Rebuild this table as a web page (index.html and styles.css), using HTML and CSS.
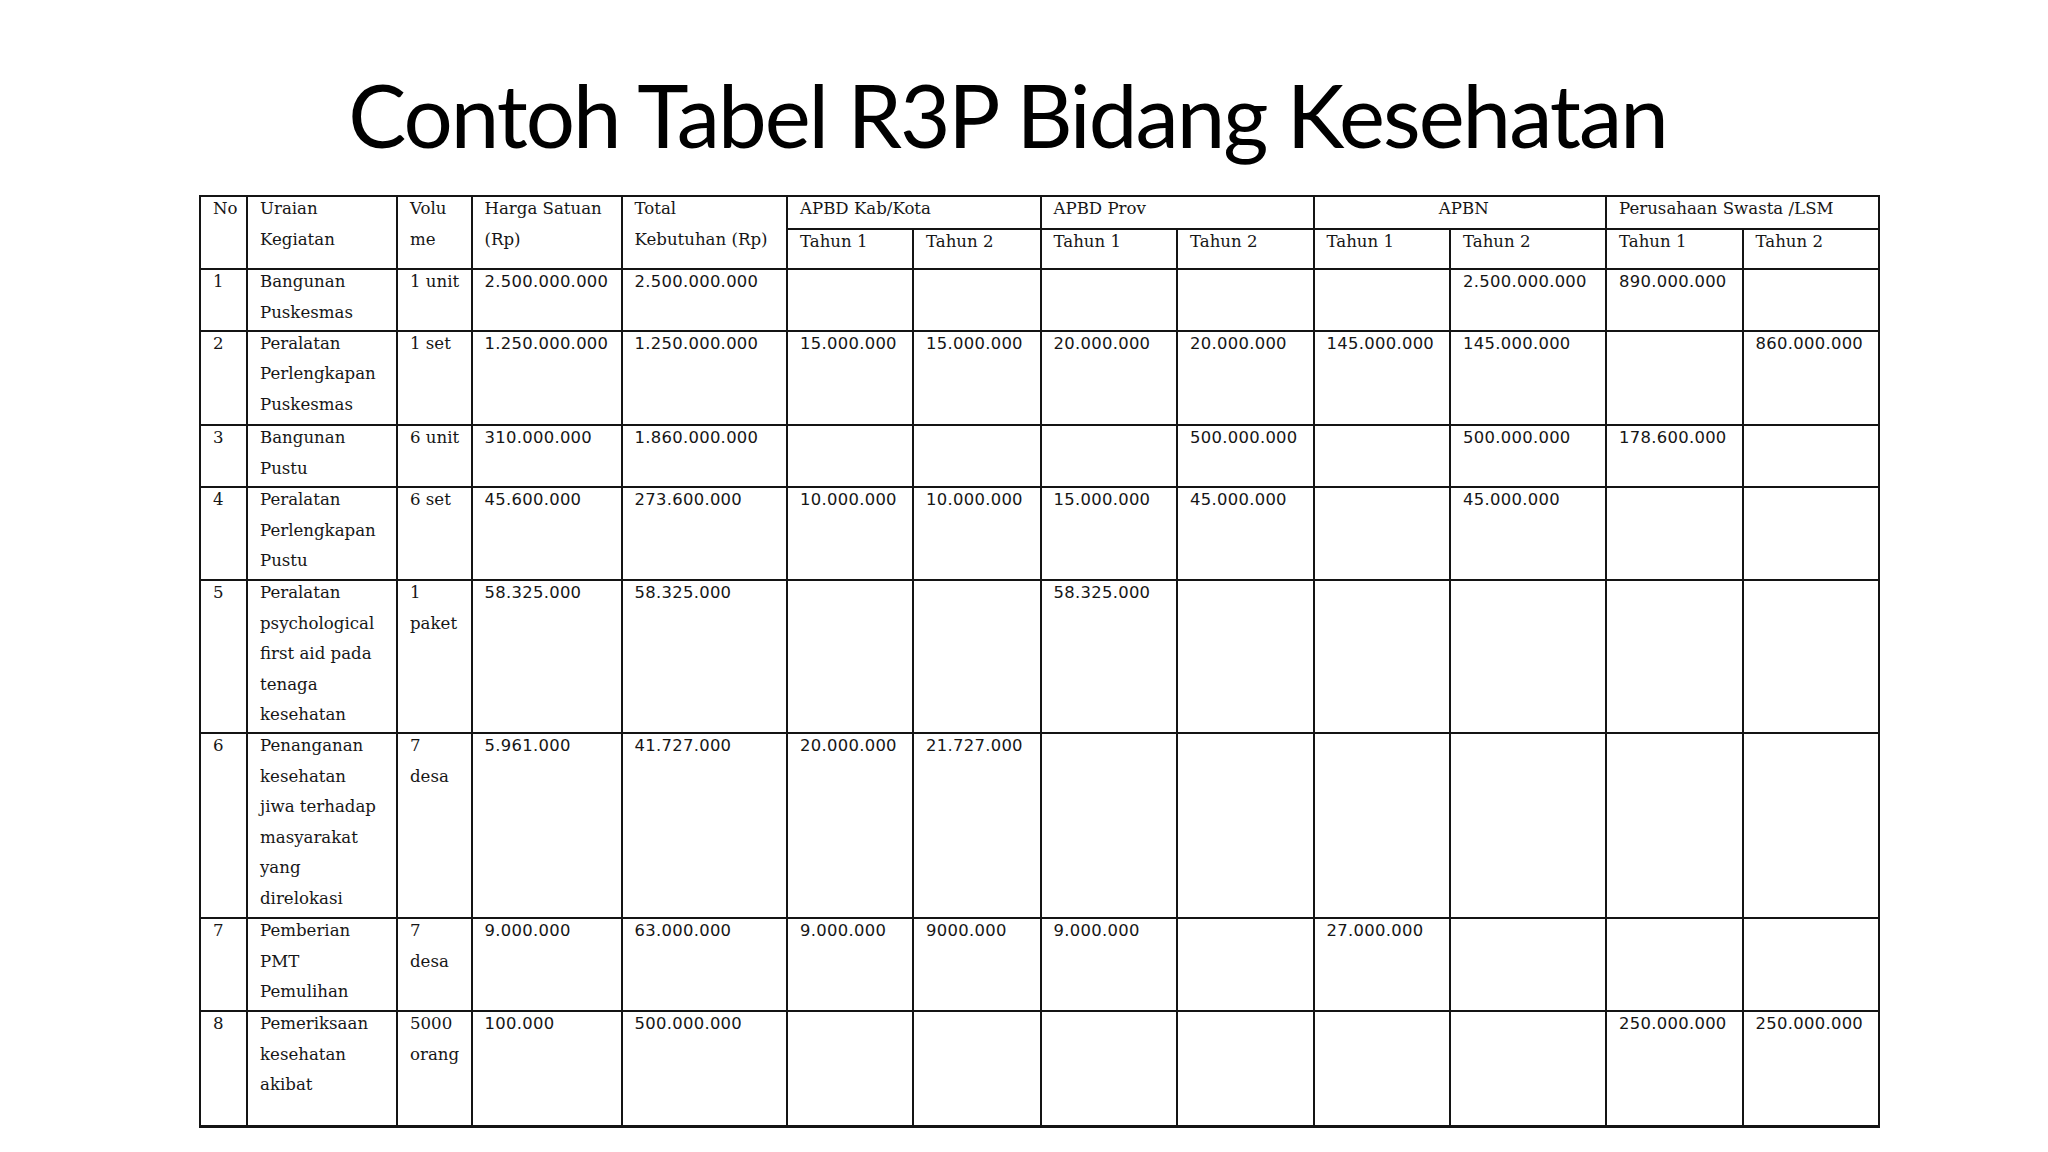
FILE: index.html
```html
<!DOCTYPE html>
<html lang="id">
<head>
<meta charset="utf-8">
<title>Contoh Tabel R3P Bidang Kesehatan</title>
<link rel="stylesheet" href="styles.css">
</head>
<body>
<div class="slide">
  <h1 class="title">Contoh Tabel R3P Bidang Kesehatan</h1>
  <div class="table-wrap">
    <table class="r3p">
      <colgroup>
        <col class="w-no"><col class="w-uraian"><col class="w-vol"><col class="w-harga"><col class="w-total">
        <col class="w-a1"><col class="w-a2"><col class="w-b1"><col class="w-b2">
        <col class="w-c1"><col class="w-c2"><col class="w-d1"><col class="w-d2">
      </colgroup>
      <thead>
        <tr class="h1">
          <td rowspan="2">No</td>
          <td rowspan="2">Uraian<br>Kegiatan</td>
          <td rowspan="2">Volu<br>me</td>
          <td rowspan="2">Harga Satuan<br>(Rp)</td>
          <td rowspan="2">Total<br>Kebutuhan (Rp)</td>
          <td colspan="2">APBD Kab/Kota</td>
          <td colspan="2">APBD Prov</td>
          <td colspan="2" class="center">APBN</td>
          <td colspan="2">Perusahaan Swasta /LSM</td>
        </tr>
        <tr class="h2">
          <td>Tahun 1</td><td>Tahun 2</td>
          <td>Tahun 1</td><td>Tahun 2</td>
          <td>Tahun 1</td><td>Tahun 2</td>
          <td>Tahun 1</td><td>Tahun 2</td>
        </tr>
      </thead>
      <tbody>
        <tr class="r1">
          <td>1</td><td>Bangunan<br>Puskesmas</td><td>1 unit</td>
          <td class="n">2.500.000.000</td><td class="n">2.500.000.000</td>
          <td></td><td></td><td></td><td></td><td></td>
          <td class="n">2.500.000.000</td><td class="n">890.000.000</td><td></td>
        </tr>
        <tr class="r2">
          <td>2</td><td>Peralatan<br>Perlengkapan<br>Puskesmas</td><td>1 set</td>
          <td class="n">1.250.000.000</td><td class="n">1.250.000.000</td>
          <td class="n">15.000.000</td><td class="n">15.000.000</td>
          <td class="n">20.000.000</td><td class="n">20.000.000</td>
          <td class="n">145.000.000</td><td class="n">145.000.000</td>
          <td></td><td class="n">860.000.000</td>
        </tr>
        <tr class="r3">
          <td>3</td><td>Bangunan<br>Pustu</td><td>6 unit</td>
          <td class="n">310.000.000</td><td class="n">1.860.000.000</td>
          <td></td><td></td><td></td><td class="n">500.000.000</td>
          <td></td><td class="n">500.000.000</td><td class="n">178.600.000</td><td></td>
        </tr>
        <tr class="r4">
          <td>4</td><td>Peralatan<br>Perlengkapan<br>Pustu</td><td>6 set</td>
          <td class="n">45.600.000</td><td class="n">273.600.000</td>
          <td class="n">10.000.000</td><td class="n">10.000.000</td>
          <td class="n">15.000.000</td><td class="n">45.000.000</td>
          <td></td><td class="n">45.000.000</td><td></td><td></td>
        </tr>
        <tr class="r5">
          <td>5</td><td>Peralatan<br>psychological<br>first aid pada<br>tenaga<br>kesehatan</td><td>1<br>paket</td>
          <td class="n">58.325.000</td><td class="n">58.325.000</td>
          <td></td><td></td><td class="n">58.325.000</td><td></td>
          <td></td><td></td><td></td><td></td>
        </tr>
        <tr class="r6">
          <td>6</td><td>Penanganan<br>kesehatan<br>jiwa terhadap<br>masyarakat<br>yang<br>direlokasi</td><td>7<br>desa</td>
          <td class="n">5.961.000</td><td class="n">41.727.000</td>
          <td class="n">20.000.000</td><td class="n">21.727.000</td>
          <td></td><td></td><td></td><td></td><td></td><td></td>
        </tr>
        <tr class="r7">
          <td>7</td><td>Pemberian<br>PMT<br>Pemulihan</td><td>7<br>desa</td>
          <td class="n">9.000.000</td><td class="n">63.000.000</td>
          <td class="n">9.000.000</td><td class="n">9000.000</td>
          <td class="n">9.000.000</td><td></td>
          <td class="n">27.000.000</td><td></td><td></td><td></td>
        </tr>
        <tr class="r8">
          <td>8</td><td>Pemeriksaan<br>kesehatan<br>akibat</td><td>5000<br>orang</td>
          <td class="n">100.000</td><td class="n">500.000.000</td>
          <td></td><td></td><td></td><td></td><td></td><td></td>
          <td class="n">250.000.000</td><td class="n">250.000.000</td>
        </tr>
      </tbody>
    </table>
  </div>
</div>
</body>
</html>
```

FILE: styles.css
```css
html, body {
  margin: 0;
  padding: 0;
  background: #ffffff;
}

.slide {
  width: 2048px;
  height: 1152px;
  overflow: hidden;
  background: #ffffff;
}

.title {
  margin: 0;
  padding: 71px 33px 0 0;
  height: 124px;
  box-sizing: content-box;
  font-family: Lato, "Open Sans", sans-serif;
  font-weight: 400;
  font-size: 87px;
  line-height: 1;
  letter-spacing: -2px;
  text-align: center;
  color: #000000;
}

.table-wrap {
  padding-left: 199px;
}

.r3p {
  border-collapse: collapse;
  table-layout: fixed;
  width: 1681px;
  font-family: "DejaVu Serif", serif;
  font-size: 16.6px;
  color: #161616;
}

.r3p td {
  border: 2px solid #141414;
  padding: 0 4px 0 12px;
  vertical-align: top;
  line-height: 30.6px;
  white-space: nowrap;
  overflow: hidden;
}

.r3p td::before {
  content: "";
  display: block;
  height: 0;
  margin-bottom: -3px;
}

.r3p td.n {
  font-family: "DejaVu Sans", sans-serif;
  font-size: 16.4px;
  letter-spacing: 0.3px;
}

.r3p td.center {
  text-align: center;
}

.r3p tbody tr:last-child td {
  border-bottom-width: 3px;
}

.w-no { width: 47px; }
.w-uraian { width: 150px; }
.w-vol { width: 74.5px; }
.w-harga { width: 150px; }
.w-total { width: 165.5px; }
.w-a1 { width: 126px; }
.w-a2 { width: 127.5px; }
.w-b1 { width: 136.5px; }
.w-b2 { width: 136.5px; }
.w-c1 { width: 136.5px; }
.w-c2 { width: 156px; }
.w-d1 { width: 136.5px; }
.w-d2 { width: 136.5px; }

.h1 { height: 32.5px; }
.h2 { height: 40.5px; }
.r1 { height: 61.5px; }
.r2 { height: 94.5px; }
.r3 { height: 62px; }
.r4 { height: 93px; }
.r5 { height: 153px; }
.r6 { height: 185px; }
.r7 { height: 93px; }
.r8 { height: 115px; }
```
